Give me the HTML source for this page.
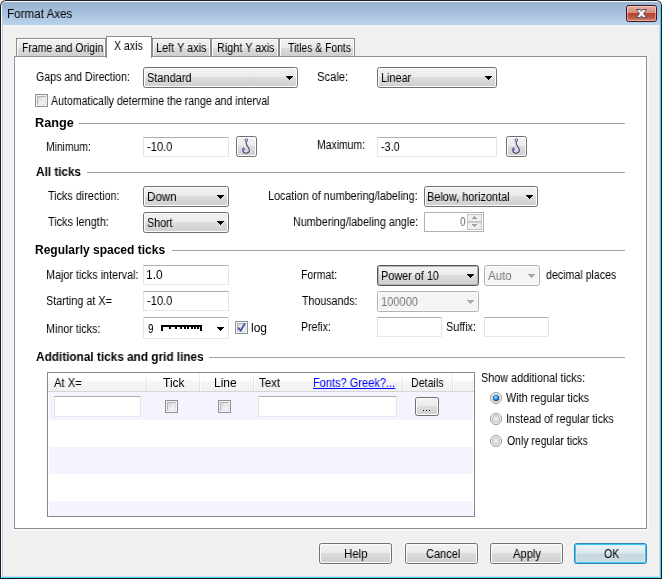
<!DOCTYPE html>
<html><head><meta charset="utf-8"><title>Format Axes</title><style>
html,body{margin:0;padding:0}
body{width:662px;height:579px;overflow:hidden;background:#fff;position:relative;font-family:"Liberation Sans",sans-serif;font-size:12px;color:#000}
div,span{box-sizing:border-box}
.t{position:absolute;white-space:pre;line-height:14px;transform-origin:0 0;will-change:transform}
.btn{position:absolute;border:1px solid #707070;border-radius:2.5px;background:linear-gradient(#f2f2f2 0%,#ebebeb 47.4%,#dddddd 47.4%,#cfcfcf 100%);box-shadow:inset 0 0 0 1px #fcfcfc}
.dis{position:absolute;border:1px solid #adb2b5;border-radius:2.5px;background:#f4f4f4;box-shadow:inset 0 0 0 1px #fcfcfc}
.edit{position:absolute;background:#fff;border:1px solid #e2e3ea;border-top-color:#abadb3;border-bottom-color:#e3e9ef;border-radius:1px}
.arr{position:absolute;width:7px;height:4px;background:linear-gradient(#000,#000) 0 0/7px 1px no-repeat,linear-gradient(#000,#000) 1px 1px/5px 1px no-repeat,linear-gradient(#000,#000) 2px 2px/3px 1px no-repeat,linear-gradient(#000,#000) 3px 3px/1px 1px no-repeat}
.arr.g{background:linear-gradient(#a9a9a9,#a9a9a9) 0 0/7px 1px no-repeat,linear-gradient(#a9a9a9,#a9a9a9) 1px 1px/5px 1px no-repeat,linear-gradient(#a9a9a9,#a9a9a9) 2px 2px/3px 1px no-repeat,linear-gradient(#a9a9a9,#a9a9a9) 3px 3px/1px 1px no-repeat}
.cb{position:absolute;width:13px;height:13px;border:1px solid #8e8f8f;background:#f4f4f4}
.cb i{position:absolute;left:1px;top:1px;width:9px;height:9px;border:1px solid #aeb3b9;border-right-color:#d9dcdf;border-bottom-color:#e2e4e6;background:linear-gradient(135deg,#d2d5d9 0%,#e9eaec 50%,#fafafb 100%);box-sizing:border-box}
.rb{position:absolute;width:12px;height:12px;border-radius:50%;border:1px solid #8e8f8f;background:radial-gradient(circle closest-side,#f1f2f3 0%,#e2e4e7 45%,#ced2d7 66%,#b9bdc4 76%,#fbfbfb 84%,#fff 100%)}
.tab{position:absolute;border:1px solid #898c95;border-bottom:none;background:linear-gradient(#f2f2f2 0%,#ebebeb 50%,#dddddd 50%,#cfcfcf 100%);box-shadow:inset 1px 1px 0 #fcfcfc,inset -1px 0 0 #fcfcfc}
.hl{position:absolute;height:1px;background:#a0a0a0}
</style></head><body>
<div style="position:absolute;left:0px;top:0px;width:662px;height:579px;background:#1c1c1c;border-radius:6px 6px 0 0"></div>
<div style="position:absolute;left:1px;top:1px;width:660px;height:577px;background:#fdfdfd;border-radius:5px 5px 0 0"></div>
<div style="position:absolute;left:2px;top:1px;width:659px;height:577px;background:#45d5fa;border-radius:0 5px 0 0;clip-path:inset(3px 0 0 0)"></div>
<div style="position:absolute;left:1px;top:577px;width:660px;height:1px;background:#45d5fa"></div>
<div style="position:absolute;left:2px;top:2px;width:658px;height:575px;background:#b9d1ea;border-radius:4px 4px 0 0"></div>
<div style="position:absolute;left:2px;top:2px;width:658px;height:23px;background:linear-gradient(#98b2d2 0%,#9cb6d5 15%,#b9d3ec 100%);border-radius:4px 4px 0 0"></div>
<div style="position:absolute;left:1px;top:1px;width:659px;height:1px;background:#fbfcfe;left:5px;width:652px"></div>
<div style="position:absolute;left:659px;top:25px;width:1px;height:552px;background:#cdd9ea"></div>
<div style="position:absolute;left:3px;top:576px;width:657px;height:1px;background:#d6dcec"></div>
<div style="position:absolute;left:3px;top:25px;width:656px;height:551px;background:#f0f0f0"></div>
<div style="position:absolute;left:626px;top:5px;width:31px;height:17px;border:1px solid #43121f;border-radius:2.5px;background:linear-gradient(#e8aa9e 0%,#da8a79 47%,#b5402a 47%,#bf523a 72%,#cf836c 100%);box-shadow:inset 0 0 0 1px rgba(255,255,255,.42)"><svg width="29" height="15" viewBox="0 0 29 15" style="position:absolute;left:0;top:0"><path d="M9.5 3.5H13.3L14.5 5.2 15.7 3.5H19.5L16.6 7.5 19.5 11.5H15.7L14.5 9.8 13.3 11.5H9.5L12.4 7.5Z" fill="#f7f7f7" stroke="#50556c" stroke-width="1" stroke-linejoin="round"/></svg></div>
<div style="position:absolute;left:14px;top:56px;width:633px;height:473px;background:#fff;border:1px solid #898c95"></div>
<div style="position:absolute;left:647px;top:57px;width:2px;height:474px;background:#f8f8f8"></div>
<div style="position:absolute;left:13px;top:529px;width:636px;height:2px;background:#f8f8f8"></div>
<div style="position:absolute;left:13px;top:57px;width:1px;height:472px;background:#f8f8f8"></div>
<div class="tab" style="left:16px;top:38px;width:90px;height:18px"></div>
<div class="tab" style="left:152px;top:38px;width:59px;height:18px"></div>
<div class="tab" style="left:211px;top:38px;width:68px;height:18px"></div>
<div class="tab" style="left:279px;top:38px;width:76px;height:18px"></div>
<div style="position:absolute;left:106px;top:36px;width:46px;height:22px;background:#fff;border:1px solid #898c95;border-bottom:none"></div>
<div class="hl" style="left:79px;top:123px;width:546px"></div>
<div class="hl" style="left:87px;top:172px;width:538px"></div>
<div class="hl" style="left:172px;top:250px;width:453px"></div>
<div class="hl" style="left:209px;top:357px;width:416px"></div>
<div class="btn" style="left:143px;top:67px;width:155px;height:21px"></div><div class="arr" style="left:286px;top:76px"></div>
<div class="btn" style="left:377px;top:67px;width:120px;height:21px"></div><div class="arr" style="left:485px;top:76px"></div>
<div class="cb" style="left:35px;top:94px"><i></i></div>
<div class="edit" style="left:143px;top:137px;width:86px;height:20px;"></div>
<div class="edit" style="left:377px;top:137px;width:120px;height:20px;"></div>
<div class="btn" style="left:236px;top:136px;width:21px;height:21px"><svg width="19" height="19" viewBox="0 0 19 19" style="position:absolute;left:0;top:0"><circle cx="9.35" cy="3.25" r="1.25" fill="#fff" stroke="#3d3b86" stroke-width="1"/><path d="M9.25 4.7 L9.3 6.9 C9.9 9 12.3 10.8 12.45 13.2 C12.5 15.3 10.4 16.3 8.6 16.2 C7 16.1 5.9 15 5.85 13.6 L6.1 11.6" fill="none" stroke="#3f3d6c" stroke-width="1.05" stroke-linecap="round" stroke-linejoin="round"/><path d="M6.5 10.3 L5.3 13.5 L7.7 12.6 Z" fill="#615dc0" stroke="#615dc0" stroke-width=".5" stroke-linejoin="round"/></svg></div>
<div class="btn" style="left:506px;top:136px;width:21px;height:21px"><svg width="19" height="19" viewBox="0 0 19 19" style="position:absolute;left:0;top:0"><circle cx="9.35" cy="3.25" r="1.25" fill="#fff" stroke="#3d3b86" stroke-width="1"/><path d="M9.25 4.7 L9.3 6.9 C9.9 9 12.3 10.8 12.45 13.2 C12.5 15.3 10.4 16.3 8.6 16.2 C7 16.1 5.9 15 5.85 13.6 L6.1 11.6" fill="none" stroke="#3f3d6c" stroke-width="1.05" stroke-linecap="round" stroke-linejoin="round"/><path d="M6.5 10.3 L5.3 13.5 L7.7 12.6 Z" fill="#615dc0" stroke="#615dc0" stroke-width=".5" stroke-linejoin="round"/></svg></div>
<div class="btn" style="left:143px;top:186px;width:86px;height:21px"></div><div class="arr" style="left:217px;top:195px"></div>
<div class="btn" style="left:143px;top:212px;width:86px;height:21px"></div><div class="arr" style="left:217px;top:221px"></div>
<div class="btn" style="left:424px;top:186px;width:114px;height:21px"></div><div class="arr" style="left:526px;top:195px"></div>
<div style="position:absolute;left:424px;top:212px;width:60px;height:20px;background:#fff;border:1px solid #afb1b8"></div>
<div style="position:absolute;left:467px;top:214px;width:15px;height:16px;background:#efefef;border:1px solid #c4c4c8"></div>
<div style="position:absolute;left:468px;top:221px;width:13px;height:2px;background:#c9c9cd"></div>
<div style="position:absolute;left:474px;top:216px;width:1px;height:1px;background:#9c9ca6"></div><div style="position:absolute;left:473px;top:217px;width:3px;height:1px;background:#9c9ca6"></div><div style="position:absolute;left:472px;top:218px;width:5px;height:1px;background:#9c9ca6"></div>
<div style="position:absolute;left:472px;top:224px;width:5px;height:1px;background:#9c9ca6"></div><div style="position:absolute;left:473px;top:225px;width:3px;height:1px;background:#9c9ca6"></div><div style="position:absolute;left:474px;top:226px;width:1px;height:1px;background:#9c9ca6"></div>
<div class="edit" style="left:143px;top:265px;width:86px;height:20px;"></div>
<div class="edit" style="left:143px;top:291px;width:86px;height:20px;"></div>
<div class="edit" style="left:143px;top:317px;width:86px;height:22px;border-radius:2px"></div>
<div class="arr" style="left:217px;top:327px"></div>
<div style="position:absolute;left:161px;top:325px;width:41px;height:2px;background:#000"></div><div style="position:absolute;left:161px;top:325px;width:2px;height:6px;background:#000"></div><div style="position:absolute;left:200px;top:325px;width:2px;height:6px;background:#000"></div><div style="position:absolute;left:169px;top:327px;width:2px;height:2px;background:#000"></div><div style="position:absolute;left:175px;top:327px;width:2px;height:2px;background:#000"></div><div style="position:absolute;left:180px;top:327px;width:2px;height:2px;background:#000"></div><div style="position:absolute;left:184px;top:327px;width:2px;height:2px;background:#000"></div><div style="position:absolute;left:187px;top:327px;width:2px;height:2px;background:#000"></div><div style="position:absolute;left:191px;top:327px;width:2px;height:2px;background:#000"></div><div style="position:absolute;left:194px;top:327px;width:2px;height:2px;background:#000"></div><div style="position:absolute;left:197px;top:327px;width:2px;height:2px;background:#000"></div>
<div class="cb" style="left:235px;top:321px"><i></i><svg width="11" height="11" viewBox="0 0 11 11" style="position:absolute;left:0;top:0"><path d="M2.6 6.1 L4.7 8.8 L8.6 1.9" fill="none" stroke="#3e54a4" stroke-width="1.8" stroke-linecap="round" stroke-linejoin="round"/></svg></div>
<div class="btn" style="left:377px;top:265px;width:102px;height:21px;border-color:#555;box-shadow:inset 0 0 0 1px #b4b4b4"></div><div class="arr" style="left:467px;top:274px"></div>
<div class="dis" style="left:484px;top:265px;width:56px;height:21px"></div><div class="arr g" style="left:528px;top:274px"></div>
<div class="dis" style="left:377px;top:291px;width:102px;height:21px"></div><div class="arr g" style="left:467px;top:300px"></div>
<div class="edit" style="left:377px;top:317px;width:65px;height:20px;"></div>
<div class="edit" style="left:484px;top:317px;width:65px;height:20px;"></div>
<div style="position:absolute;left:47px;top:372px;width:428px;height:145px;background:#fff;border:1px solid #828790"></div>
<div style="position:absolute;left:48px;top:373px;width:426px;height:18px;background:linear-gradient(#ffffff 0%,#ffffff 40%,#f4f5f7 45%,#f1f2f4 100%)"></div>
<div style="position:absolute;left:48px;top:391px;width:426px;height:1px;background:#d5d5d5"></div>
<div style="position:absolute;left:146px;top:373px;width:1px;height:18px;background:linear-gradient(#f0f0f1,#dcdde0)"></div><div style="position:absolute;left:147px;top:373px;width:1px;height:18px;background:#fff"></div>
<div style="position:absolute;left:199px;top:373px;width:1px;height:18px;background:linear-gradient(#f0f0f1,#dcdde0)"></div><div style="position:absolute;left:200px;top:373px;width:1px;height:18px;background:#fff"></div>
<div style="position:absolute;left:253px;top:373px;width:1px;height:18px;background:linear-gradient(#f0f0f1,#dcdde0)"></div><div style="position:absolute;left:254px;top:373px;width:1px;height:18px;background:#fff"></div>
<div style="position:absolute;left:402px;top:373px;width:1px;height:18px;background:linear-gradient(#f0f0f1,#dcdde0)"></div><div style="position:absolute;left:403px;top:373px;width:1px;height:18px;background:#fff"></div>
<div style="position:absolute;left:452px;top:373px;width:1px;height:18px;background:linear-gradient(#f0f0f1,#dcdde0)"></div><div style="position:absolute;left:453px;top:373px;width:1px;height:18px;background:#fff"></div>
<div style="position:absolute;left:49px;top:392px;width:424px;height:28px;background:#f4f4fe"></div>
<div style="position:absolute;left:49px;top:447px;width:424px;height:27px;background:#f4f4fe"></div>
<div style="position:absolute;left:49px;top:501px;width:424px;height:15px;background:#f4f4fe"></div>
<div class="edit" style="left:54px;top:396px;width:87px;height:21px;"></div>
<div class="edit" style="left:258px;top:396px;width:139px;height:21px;"></div>
<div class="cb" style="left:165px;top:400px"><i></i></div>
<div class="cb" style="left:218px;top:400px"><i></i></div>
<div class="btn" style="left:415px;top:397px;width:24px;height:19px"></div>
<div style="position:absolute;left:423px;top:410px;width:1px;height:1px;background:#000"></div>
<div style="position:absolute;left:426px;top:410px;width:1px;height:1px;background:#000"></div>
<div style="position:absolute;left:429px;top:410px;width:1px;height:1px;background:#000"></div>
<div class="rb" style="left:490px;top:392px"><div style="position:absolute;left:2px;top:2px;width:6px;height:6px;border-radius:50%;background:radial-gradient(circle at 45% 40%,#a2e2fa 0,#30a0e6 36%,#1a5ca8 54%,#0c2a56 74%,#0c2a56 100%)"></div></div>
<div class="rb" style="left:490px;top:413px"></div>
<div class="rb" style="left:490px;top:435px"></div>
<div class="btn" style="left:319px;top:543px;width:73px;height:21px;box-shadow:inset 0 0 0 1px #fcfcfc,0 0 0 1px rgba(255,255,255,.45)"></div>
<div class="btn" style="left:405px;top:543px;width:73px;height:21px;box-shadow:inset 0 0 0 1px #fcfcfc,0 0 0 1px rgba(255,255,255,.45)"></div>
<div class="btn" style="left:490px;top:543px;width:73px;height:21px;box-shadow:inset 0 0 0 1px #fcfcfc,0 0 0 1px rgba(255,255,255,.45)"></div>
<div class="btn" style="left:574px;top:543px;width:73px;height:21px;border-color:#3c7fb1;box-shadow:inset 0 0 0 1px #3bc8f4,inset 0 0 0 2px rgba(200,240,255,.6);background:linear-gradient(#f0f4f7 0%,#dde7ed 48%,#c6d8e1 52%,#cbdbe4 100%)"></div>
<span class="t" style="left:7.03px;top:7px;transform:scaleX(0.9697);font-size:12px;color:#000;">Format Axes</span>
<span class="t" style="left:22.13px;top:41px;transform:scaleX(0.8696);">Frame and Origin</span>
<span class="t" style="left:114.00px;top:39px;transform:scaleX(0.8788);">X axis</span>
<span class="t" style="left:156.09px;top:41px;transform:scaleX(0.9074);">Left Y axis</span>
<span class="t" style="left:217.10px;top:41px;transform:scaleX(0.9032);">Right Y axis</span>
<span class="t" style="left:288.00px;top:41px;transform:scaleX(0.8630);">Titles &amp; Fonts</span>
<span class="t" style="left:36.00px;top:70px;transform:scaleX(0.8857);">Gaps and Direction:</span>
<span class="t" style="left:147.09px;top:71px;transform:scaleX(0.9149);">Standard</span>
<span class="t" style="left:317.06px;top:70px;transform:scaleX(0.9355);">Scale:</span>
<span class="t" style="left:381.09px;top:71px;transform:scaleX(0.9062);">Linear</span>
<span class="t" style="left:51.00px;top:94px;transform:scaleX(0.8826);">Automatically determine the range and interval</span>
<span class="t" style="left:34.94px;top:116px;transform:scaleX(1.0571);font-weight:bold;">Range</span>
<span class="t" style="left:46.14px;top:140px;transform:scaleX(0.8600);">Minimum:</span>
<span class="t" style="left:147.00px;top:140px;transform:scaleX(0.9259);">-10.0</span>
<span class="t" style="left:317.13px;top:138px;transform:scaleX(0.8679);">Maximum:</span>
<span class="t" style="left:381.00px;top:140px;transform:scaleX(0.9000);">-3.0</span>
<span class="t" style="left:36.00px;top:165px;transform:scaleX(0.9783);font-weight:bold;">All ticks</span>
<span class="t" style="left:48.00px;top:189px;transform:scaleX(0.8987);">Ticks direction:</span>
<span class="t" style="left:147.03px;top:190px;transform:scaleX(0.9655);">Down</span>
<span class="t" style="left:48.00px;top:215px;transform:scaleX(0.9091);">Ticks length:</span>
<span class="t" style="left:147.11px;top:216px;transform:scaleX(0.8929);">Short</span>
<span class="t" style="left:268.10px;top:189px;transform:scaleX(0.8970);">Location of numbering/labeling:</span>
<span class="t" style="left:427.09px;top:190px;transform:scaleX(0.9101);">Below, horizontal</span>
<span class="t" style="left:293.10px;top:215px;transform:scaleX(0.8978);">Numbering/labeling angle:</span>
<span class="t" style="left:460.00px;top:215px;transform:scaleX(0.8333);color:#6d6d6d;">0</span>
<span class="t" style="left:35.00px;top:243px;transform:scaleX(1.0000);font-weight:bold;">Regularly spaced ticks</span>
<span class="t" style="left:46.10px;top:268px;transform:scaleX(0.9010);">Major ticks interval:</span>
<span class="t" style="left:146.00px;top:268px;transform:scaleX(1.0000);">1.0</span>
<span class="t" style="left:301.13px;top:268px;transform:scaleX(0.8718);">Format:</span>
<span class="t" style="left:381.10px;top:269px;transform:scaleX(0.9048);">Power of 10</span>
<span class="t" style="left:488.00px;top:269px;transform:scaleX(0.9583);color:#787878;">Auto</span>
<span class="t" style="left:546.00px;top:268px;transform:scaleX(0.8861);">decimal places</span>
<span class="t" style="left:46.10px;top:294px;transform:scaleX(0.9028);">Starting at X=</span>
<span class="t" style="left:147.00px;top:294px;transform:scaleX(0.9259);">-10.0</span>
<span class="t" style="left:302.00px;top:294px;transform:scaleX(0.8871);">Thousands:</span>
<span class="t" style="left:381.08px;top:295px;transform:scaleX(0.9231);color:#787878;">100000</span>
<span class="t" style="left:46.10px;top:322px;transform:scaleX(0.8983);">Minor ticks:</span>
<span class="t" style="left:148.00px;top:322px;transform:scaleX(0.8333);">9</span>
<span class="t" style="left:251.00px;top:321px;transform:scaleX(1.0000);">log</span>
<span class="t" style="left:301.12px;top:320px;transform:scaleX(0.8750);">Prefix:</span>
<span class="t" style="left:446.10px;top:320px;transform:scaleX(0.9032);">Suffix:</span>
<span class="t" style="left:36.00px;top:350px;transform:scaleX(0.9824);font-weight:bold;">Additional ticks and grid lines</span>
<span class="t" style="left:54.00px;top:376px;transform:scaleX(0.9310);">At X=</span>
<span class="t" style="left:163.00px;top:376px;transform:scaleX(1.0000);">Tick</span>
<span class="t" style="left:214.00px;top:376px;transform:scaleX(1.0000);">Line</span>
<span class="t" style="left:259.00px;top:376px;transform:scaleX(0.9545);">Text</span>
<span class="t" style="left:313.08px;top:376px;transform:scaleX(0.9195);color:#0000ff;text-decoration:underline;">Fonts? Greek?...</span>
<span class="t" style="left:411.11px;top:376px;transform:scaleX(0.8889);">Details</span>
<span class="t" style="left:481.10px;top:371px;transform:scaleX(0.9027);">Show additional ticks:</span>
<span class="t" style="left:506.00px;top:391px;transform:scaleX(0.9022);">With regular ticks</span>
<span class="t" style="left:506.11px;top:412px;transform:scaleX(0.8917);">Instead of regular ticks</span>
<span class="t" style="left:507.00px;top:434px;transform:scaleX(0.8710);">Only regular ticks</span>
<span class="t" style="left:344.04px;top:547px;transform:scaleX(0.9565);">Help</span>
<span class="t" style="left:426.00px;top:547px;transform:scaleX(0.9189);">Cancel</span>
<span class="t" style="left:513.00px;top:547px;transform:scaleX(0.9333);">Apply</span>
<span class="t" style="left:604.00px;top:547px;transform:scaleX(0.8824);">OK</span>
</body></html>
